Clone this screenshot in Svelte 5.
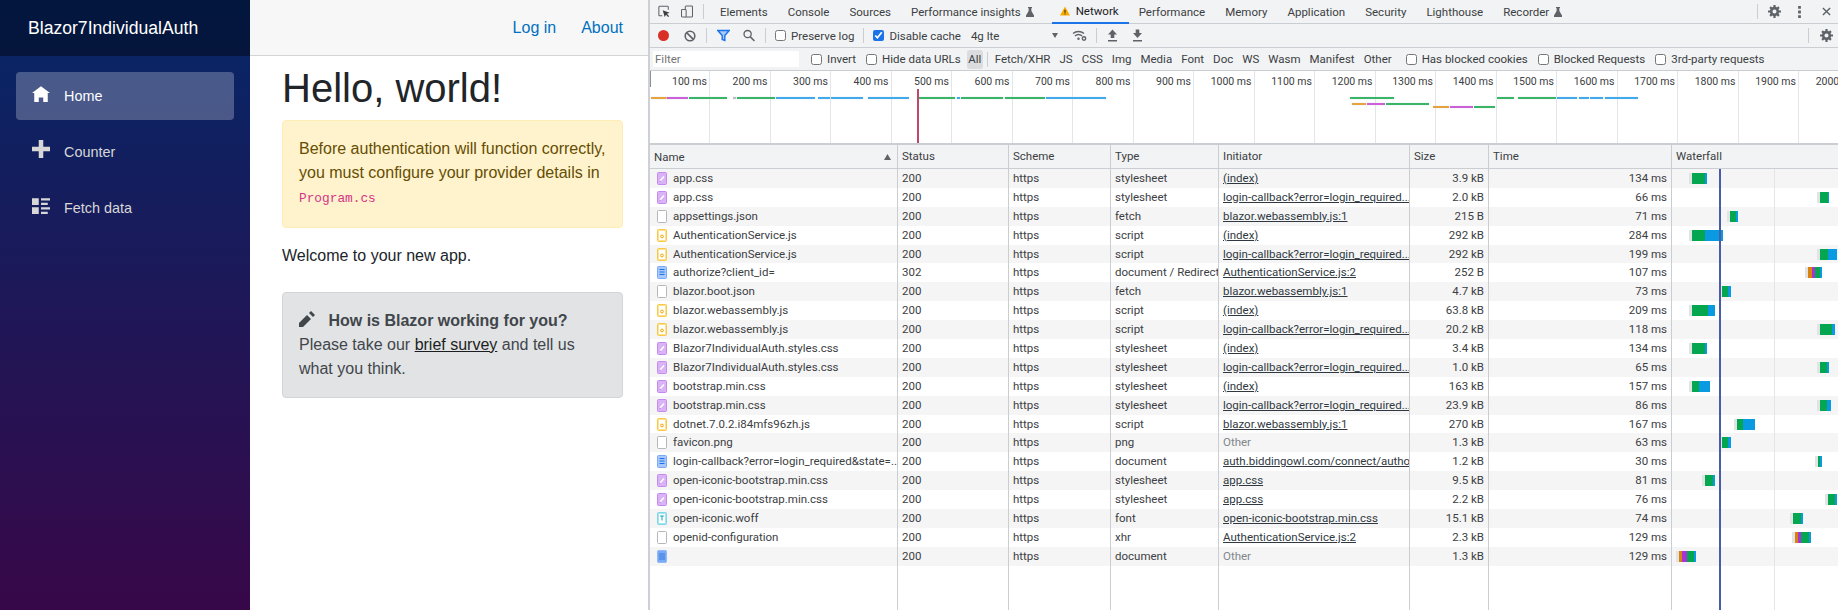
<script>
  const tabs = ['Elements', 'Console', 'Sources'];
  const tabsAfter = ['Performance', 'Memory', 'Application', 'Security', 'Lighthouse'];
  const filters = ['Fetch/XHR', 'JS', 'CSS', 'Img', 'Media', 'Font', 'Doc', 'WS', 'Wasm', 'Manifest', 'Other'];

  const LOGIN = 'login-callback?error=login_required...';
  const BOOT = 'blazor.webassembly.js:1';
  const AUTH = 'AuthenticationService.js:2';

  // name, status, type, initiator, size, time, kind, bar [left, orange, purple, green, blue]
  const rows = [
    ['app.css', '200', 'stylesheet', '(index)', '3.9 kB', '134 ms', 'css', [20.4, 0, 0, 12.5, 2.2]],
    ['app.css', '200', 'stylesheet', LOGIN, '2.0 kB', '66 ms', 'css', [148.3, 0, 0, 7.4, 1.8]],
    ['appsettings.json', '200', 'fetch', BOOT, '215 B', '71 ms', 'blank', [57.6, 0, 0, 6.6, 1.8]],
    ['AuthenticationService.js', '200', 'script', '(index)', '292 kB', '284 ms', 'js', [20.4, 0, 0, 12.9, 17.3]],
    ['AuthenticationService.js', '200', 'script', LOGIN, '292 kB', '199 ms', 'js', [148.3, 0, 0, 7.4, 12]],
    ['authorize?client_id=', '302', 'document / Redirect', AUTH, '252 B', '107 ms', 'doc', [135.7, 4, 3.7, 4.8, 1.8]],
    ['blazor.boot.json', '200', 'fetch', BOOT, '4.7 kB', '73 ms', 'blank', [49.5, 0, 0, 6, 3.3]],
    ['blazor.webassembly.js', '200', 'script', '(index)', '63.8 kB', '209 ms', 'js', [20.4, 0, 0, 15.8, 6.6]],
    ['blazor.webassembly.js', '200', 'script', LOGIN, '20.2 kB', '118 ms', 'js', [148.3, 0, 0, 11.4, 3.3]],
    ['Blazor7IndividualAuth.styles.css', '200', 'stylesheet', '(index)', '3.4 kB', '134 ms', 'css', [20.4, 0, 0, 12.5, 2.2]],
    ['Blazor7IndividualAuth.styles.css', '200', 'stylesheet', LOGIN, '1.0 kB', '65 ms', 'css', [148.3, 0, 0, 6.6, 1.8]],
    ['bootstrap.min.css', '200', 'stylesheet', '(index)', '163 kB', '157 ms', 'css', [20.4, 0, 0, 6.6, 10.7]],
    ['bootstrap.min.css', '200', 'stylesheet', LOGIN, '23.9 kB', '86 ms', 'css', [148.3, 0, 0, 7, 4]],
    ['dotnet.7.0.2.i84mfs96zh.js', '200', 'script', BOOT, '270 kB', '167 ms', 'js', [65, 0, 0, 5.9, 11.8]],
    ['favicon.png', '200', 'png', 'Other', '1.3 kB', '63 ms', 'blank', [50.2, 0, 0, 5.9, 2.6]],
    ['login-callback?error=login_required&state=...', '200', 'document', 'auth.biddingowl.com/connect/autho...', '1.2 kB', '30 ms', 'doc', [146, 0, 0, 2.2, 1.8]],
    ['open-iconic-bootstrap.min.css', '200', 'stylesheet', 'app.css', '9.5 kB', '81 ms', 'css', [33.3, 0, 0, 8.1, 1.8]],
    ['open-iconic-bootstrap.min.css', '200', 'stylesheet', 'app.css', '2.2 kB', '76 ms', 'css', [156, 0, 0, 7, 1.5]],
    ['open-iconic.woff', '200', 'font', 'open-iconic-bootstrap.min.css', '15.1 kB', '74 ms', 'font', [121.4, 0, 0, 7.7, 1.8]],
    ['openid-configuration', '200', 'xhr', AUTH, '2.3 kB', '129 ms', 'blank', [122.5, 3.3, 3.7, 7.7, 1.5]],
    ['', '200', 'document', 'Other', '1.3 kB', '129 ms', 'tablet', [7, 3.3, 4.4, 7.4, 1.5]]
  ];

  const ticks = Array.from({ length: 20 }, (_, i) => ({ x: 59 + 60.5 * i, label: `${(i + 1) * 100} ms` }));

  const O = '#e8a33d', M = '#cf5fd8', G = '#3ab566', B = '#42a9ea', N = '#bdbdbd';
  // x1, x2 in page pixels, lane y from top of overview, colour
  const segments = [
    [651, 666.5, 26, O], [667, 688, 26, M], [688.7, 727.5, 26, G], [733, 736, 26, N], [737, 775, 26, G],
    [775.7, 815, 26, B], [818, 830, 26, B], [831, 862.7, 26, B], [868, 909.4, 26, B],
    [917, 954.5, 26, G], [956.5, 960.4, 26, B], [961, 1002.7, 26, G], [1005, 1044.6, 26, G], [1046, 1105.5, 26, B],
    [1350.3, 1394.5, 26, G], [1352, 1366, 32, O], [1367, 1385, 32, M], [1386, 1429, 32, G],
    [1432.5, 1448.7, 34.5, O], [1450, 1472.7, 34.5, M], [1473.8, 1495, 34.5, G],
    [1496.6, 1514.3, 26, G], [1517.6, 1555.6, 26, G], [1556.7, 1577, 26, B], [1578.5, 1589, 26, B],
    [1590, 1603, 26, B], [1605, 1638, 26, B]
  ];

  const isLink = (t) => t !== 'Other';
</script>

{#snippet gear()}
  <svg class="gear" viewBox="0 0 14 14">
    <circle cx="7" cy="7" r="3.6" fill="none" stroke="#5f6368" stroke-width="2.8" />
    <path d="M5.8 0h2.4v3h-2.4zM5.8 11h2.4v3h-2.4zM0 5.8h3v2.4h-3zM11 5.8h3v2.4h-3zM1.4 3.1l1.7-1.7 2 2-1.7 1.7zM8.9 10.6l1.7-1.7 2 2-1.7 1.7zM10.9 1.4l1.7 1.7-2 2-1.7-1.7zM3.4 8.9l1.7 1.7-2 2-1.7-1.7z" fill="#5f6368" />
  </svg>
{/snippet}

{#snippet flask()}
  <svg class="flask" viewBox="0 0 8 10">
    <path d="M2 0h4v1h-.6v3l2.6 4.6v1.4h-8v-1.4l2.6-4.6v-3h-.6z" fill="#5f6368" />
  </svg>
{/snippet}

{#snippet fileIcon(kind)}
  <svg class="file" viewBox="0 0 10 13">
    {#if kind === 'css'}
      <rect x=".5" y=".5" width="9" height="12" rx="1" fill="#d9b3f5" stroke="#c58af0" />
      <path d="M3 9l4-4.5" stroke="#fff" stroke-width="1.5" />
      <path d="M2.5 9.6l1.4-.2-1-1z" fill="#9334e6" />
    {:else if kind === 'js'}
      <rect x=".5" y=".5" width="9" height="12" rx="1" fill="#fde293" stroke="#f9c846" />
      <rect x="2" y="2" width="6" height="9" fill="#fff" />
      <circle cx="5" cy="7.5" r="1.4" fill="none" stroke="#f2a600" />
    {:else if kind === 'doc'}
      <rect x=".5" y=".5" width="9" height="12" rx="1" fill="#a8c7fa" stroke="#7baaf7" />
      <path d="M2.5 3.5h5M2.5 6h5M2.5 8.5h5" stroke="#1a73e8" />
    {:else if kind === 'font'}
      <rect x=".5" y=".5" width="9" height="12" rx="1" fill="#a5e6f1" stroke="#7ed6e6" />
      <rect x="2" y="2" width="6" height="9" fill="#fff" />
      <path d="M3.2 4h3.6M5 4v4.5" stroke="#12a4bd" />
    {:else if kind === 'tablet'}
      <rect x=".5" y=".5" width="9" height="12" rx="1" fill="#7baaf7" stroke="#8fb8f8" />
      <rect x="2" y="3" width="6" height="7" fill="#5b93ea" />
    {:else}
      <rect x=".5" y=".5" width="9" height="12" rx="1" fill="#fff" stroke="#b5b7ba" />
    {/if}
  </svg>
{/snippet}

<div class="page">
  <aside class="sidebar">
    <div class="brand">Blazor7IndividualAuth</div>
    <nav class="nav">
      <a class="nav-item active" href="#home">
        <svg viewBox="0 -1 8 8"><path d="M4 0l-4 3h1v4h2v-2h2v2h2v-4.03l1 .03-4-3z" /></svg>
        Home
      </a>
      <a class="nav-item" href="#counter">
        <svg viewBox="0 0 8 8"><path d="M3 0v3h-3v2h3v3h2v-3h3v-2h-3v-3h-2z" /></svg>
        Counter
      </a>
      <a class="nav-item" href="#fetch">
        <svg viewBox="0 -1 8 8"><path d="M0 0v3h3v-3h-3zm4 0v1h4v-1h-4zm0 2v1h3v-1h-3zm-4 2v3h3v-3h-3zm4 0v1h4v-1h-4zm0 2v1h3v-1h-3z" /></svg>
        Fetch data
      </a>
    </nav>
  </aside>

  <main class="main">
    <div class="top-row">
      <a href="#login">Log in</a>
      <a href="#about">About</a>
    </div>
    <article class="content">
      <h1>Hello, world!</h1>
      <div class="alert warning">
        Before authentication will function correctly, you must configure your provider details in
        <code>Program.cs</code>
      </div>
      <p>Welcome to your new app.</p>
      <div class="alert secondary">
        <svg class="pencil" viewBox="0 0 8 8"><path d="M6 0l-1 1 2 2 1-1-2-2zm-2 2l-4 4v2h2l4-4-2-2z" /></svg>
        <strong>How is Blazor working for you?</strong>
        <br />
        Please take our <a href="#survey">brief survey</a> and tell us what you think.
      </div>
    </article>
  </main>

  <section class="devtools">
    <div class="bar tabbar">
      <svg class="tool-icon" viewBox="0 0 14 14">
        <path d="M5 12h-3a1 1 0 0 1-1-1v-9a1 1 0 0 1 1-1h9a1 1 0 0 1 1 1v3" fill="none" stroke="#5f6368" stroke-width="1.2" />
        <path d="M5.5 5.5l8 3-3 1.2 2.5 2.8-1.2 1-2.4-2.8-1.6 2.6z" fill="#3c4043" />
      </svg>
      <svg class="tool-icon device" viewBox="0 0 14 14">
        <rect x="5" y=".6" width="8.4" height="12.8" rx="1" fill="none" stroke="#5f6368" stroke-width="1.2" />
        <rect x=".6" y="4.6" width="5.4" height="8.8" rx="1" fill="#f1f3f4" stroke="#5f6368" stroke-width="1.2" />
      </svg>
      <span class="sep tab-sep"></span>
      <div class="tabs">
        {#each tabs as t}<span>{t}</span>{/each}
        <span class="flask-tab">Performance insights {@render flask()}</span>
        <span class="tab-current">
          <svg class="warn" viewBox="0 0 12 11"><path d="M6 0l6 11h-12z" fill="#f9ab00" /><path d="M5.4 4h1.2v3.6h-1.2zM5.4 8.4h1.2v1.2h-1.2z" fill="#202124" /></svg>
          Network
        </span>
        {#each tabsAfter as t}<span>{t}</span>{/each}
        <span class="flask-tab">Recorder {@render flask()}</span>
      </div>
      <div class="bar-right">
        <span class="sep"></span>
        {@render gear()}
        <svg class="dots" viewBox="0 0 3 13"><path d="M0 0h3v3h-3zM0 5h3v3h-3zM0 10h3v3h-3z" fill="#5f6368" /></svg>
        <svg class="close" viewBox="0 0 10 10"><path d="M1 1l8 8M9 1l-8 8" stroke="#5f6368" stroke-width="1.6" /></svg>
      </div>
    </div>

    <div class="bar toolbar">
      <span class="record"></span>
      <svg class="tool-icon clear" viewBox="0 0 12 12">
        <circle cx="6" cy="6" r="4.8" fill="none" stroke="#5f6368" stroke-width="1.6" />
        <path d="M2.6 2.6l6.8 6.8" stroke="#5f6368" stroke-width="1.6" />
      </svg>
      <span class="sep"></span>
      <svg class="tool-icon funnel" viewBox="0 0 13 12">
        <path d="M.8 1h11.4l-4.4 5v5l-2.6-1v-4z" fill="#a8c7fa" stroke="#1a73e8" stroke-width="1.4" />
      </svg>
      <svg class="tool-icon search" viewBox="0 0 13 13">
        <circle cx="5" cy="5" r="3.9" fill="none" stroke="#5f6368" stroke-width="1.4" />
        <path d="M8 8l4.4 4.4" stroke="#5f6368" stroke-width="1.6" />
      </svg>
      <span class="sep"></span>
      <label class="check preserve"><input type="checkbox" />Preserve log</label>
      <span class="sep"></span>
      <label class="check disable"><input type="checkbox" checked />Disable cache</label>
      <span class="throttle">4g lte</span>
      <svg class="caret" viewBox="0 0 6 5"><path d="M0 0h6l-3 5z" fill="#5f6368" /></svg>
      <svg class="tool-icon wifi" viewBox="0 0 15 12">
        <path d="M1 4a8.5 8.5 0 0 1 11 0M3 6.4a5.5 5.5 0 0 1 7 0" fill="none" stroke="#5f6368" stroke-width="1.4" />
        <circle cx="6.5" cy="9.2" r="1.2" fill="#5f6368" />
        <circle cx="12" cy="9" r="1.7" fill="#f1f3f4" stroke="#5f6368" stroke-width="1.4" />
      </svg>
      <span class="sep"></span>
      <svg class="tool-icon arrow" viewBox="0 0 9 12"><path d="M4.5 0l4.5 5h-2.7v3.6h-3.6v-3.6h-2.700zM0 10.400h9v1.600h-9z" fill="#5f6368" /></svg>
      <svg class="tool-icon arrow down" viewBox="0 0 9 12"><path d="M2.700 0h3.600v3.600h2.700l-4.500 5-4.500-5h2.700zM0 10.400h9v1.600h-9z" fill="#5f6368" /></svg>
      <div class="bar-right">
        <span class="sep"></span>
        {@render gear()}
      </div>
    </div>

    <div class="bar filterbar">
      <div class="filter-input">Filter</div>
      <label class="check invert"><input type="checkbox" />Invert</label>
      <label class="check hide-urls"><input type="checkbox" />Hide data URLs</label>
      <span class="chip">All</span>
      <span class="sep"></span>
      <div class="types">
        {#each filters as f}<span>{f}</span>{/each}
      </div>
      <label class="check blocked-first"><input type="checkbox" />Has blocked cookies</label>
      <label class="check"><input type="checkbox" />Blocked Requests</label>
      <label class="check"><input type="checkbox" />3rd-party requests</label>
    </div>

    <div class="overview">
      {#each ticks as t}
        <span class="grid-line" style="left: {t.x}px"></span>
        <span class="tick" style="left: {t.x - 62}px">{t.label}</span>
      {/each}
      <span class="range-handle"></span>
      {#each segments as s}
        <span class="segment" style="left: {s[0] - 650}px; width: {s[1] - s[0]}px; top: {s[2]}px; background: {s[3]}"></span>
      {/each}
      <span class="load-line"></span>
    </div>

    <div class="table">
      <div class="row head">
        <div class="cell name-head">Name <svg class="sort" viewBox="0 0 7 6"><path d="M3.500 0l3.500 6h-7z" fill="#5f6368" /></svg></div>
        <div class="cell">Status</div>
        <div class="cell">Scheme</div>
        <div class="cell">Type</div>
        <div class="cell">Initiator</div>
        <div class="cell">Size</div>
        <div class="cell">Time</div>
        <div class="cell last">Waterfall</div>
      </div>
      <div class="body">
        <div class="columns">
          {#each Array(7) as _}<span></span>{/each}
        </div>
        {#each rows as r}
          <div class="row">
            <div class="cell name">{@render fileIcon(r[6])}<span>{r[0]}</span></div>
            <div class="cell">{r[1]}</div>
            <div class="cell">https</div>
            <div class="cell">{r[2]}</div>
            <div class="cell" class:init={isLink(r[3])} class:muted={!isLink(r[3])}>{r[3]}</div>
            <div class="cell num">{r[4]}</div>
            <div class="cell num">{r[5]}</div>
            <div class="cell last wf">
              <span class="whisker" style="left: {r[7][0] - 3}px"></span>
              <span class="wbar" style="left: {r[7][0]}px">
                <i style="width: {r[7][1]}px; background: #d9830f"></i><i style="width: {r[7][2]}px; background: #a933d6"></i><i style="width: {r[7][3]}px; background: #04a74f"></i><i style="width: {r[7][4]}px; background: #0a9ae2"></i>
              </span>
            </div>
          </div>
        {/each}
        <span class="wf-line blue"></span>
        <span class="wf-line gray"></span>
      </div>
    </div>
  </section>
</div>

<style>
  :global(body) {
    margin: 0;
    background: #fff;
    overflow: hidden;
  }
  .page {
    display: flex;
    width: 1838px;
    height: 610px;
    overflow: hidden;
    font-family: 'Liberation Sans', Arial, sans-serif;
    font-size: 16px;
    color: #212529;
  }

  .sidebar {
    width: 250px;
    flex: none;
    background: linear-gradient(180deg, #052767 0, #3a0647 640px);
  }
  .brand {
    height: 56px;
    padding-left: 28px;
    display: flex;
    align-items: center;
    background: rgba(0, 0, 0, 0.4);
    color: #fff;
    font-size: 17.6px;
  }
  .nav {
    padding: 16px 16px 0;
    display: flex;
    flex-direction: column;
    gap: 8px;
  }
  .nav-item {
    height: 48px;
    padding-left: 16px;
    display: flex;
    align-items: center;
    border-radius: 4px;
    color: #d7d7d7;
    font-size: 14.4px;
    text-decoration: none;
  }
  .nav-item svg {
    width: 18px;
    height: 18px;
    margin: 0 14px 6px 0;
    fill: #d7d7d7;
  }
  .nav-item.active {
    background: rgba(255, 255, 255, 0.25);
    color: #fff;
  }
  .nav-item.active svg {
    fill: #fff;
  }

  .main {
    width: 398px;
    flex: none;
  }
  .top-row {
    height: 56px;
    box-sizing: border-box;
    padding-right: 25px;
    display: flex;
    justify-content: flex-end;
    align-items: center;
    gap: 25px;
    background: #f7f7f7;
    border-bottom: 1px solid #d6d5d5;
  }
  .top-row a {
    color: #0071c1;
    text-decoration: none;
  }
  .content {
    padding: 8px 25px 0 32px;
    line-height: 24px;
  }
  h1 {
    margin: 0 0 8px;
    font-size: 40px;
    font-weight: 500;
    line-height: 48px;
  }
  .alert {
    padding: 16px;
    border: 1px solid;
    border-radius: 4px;
  }
  .warning {
    margin-bottom: 16px;
    background: #fff3cd;
    border-color: #ffecb5;
    color: #664d03;
  }
  code {
    font-family: 'Liberation Mono', monospace;
    font-size: 12.8px;
    color: #d63384;
  }
  p {
    margin: 0 0 24px;
  }
  .secondary {
    background: #e2e3e5;
    border-color: #d3d6d8;
    color: #41464b;
  }
  .secondary a {
    color: #1b1e21;
  }
  .pencil {
    width: 16px;
    height: 16px;
    margin-right: 9px;
    fill: #41464b;
    vertical-align: -1px;
  }

  .devtools {
    width: 1190px;
    flex: none;
    box-sizing: border-box;
    border-left: 2px solid #cdd0d5;
    display: flex;
    flex-direction: column;
    background: #f1f3f4;
    font-family: Roboto, 'Liberation Sans', sans-serif;
    font-size: 11.5px;
    color: #3c4043;
    overflow: hidden;
  }
  .bar {
    flex: none;
    display: flex;
    align-items: center;
    box-sizing: border-box;
    border-bottom: 1px solid #cacdd1;
  }
  .bar-right {
    margin-left: auto;
    display: flex;
    align-items: center;
  }
  .sep {
    flex: none;
    width: 1px;
    height: 15px;
    background: #cacdd1;
  }
  .tool-icon {
    flex: none;
    width: 12px;
    height: 13px;
  }
  .tabbar {
    height: 24px;
    padding-left: 8px;
  }
  .tabbar .device {
    margin-left: 11px;
  }
  .tab-sep {
    margin: 0 16px 0 10px;
  }
  .tabs {
    display: flex;
    align-items: center;
    gap: 20px;
    height: 100%;
  }
  .tabs span {
    white-space: nowrap;
  }
  .flask {
    width: 8px;
    height: 10px;
    margin-left: 2px;
    vertical-align: -1px;
  }
  .tab-current {
    box-sizing: border-box;
    height: 24px;
    margin-left: -2px;
    padding: 0 10px 0 8px;
    display: flex;
    align-items: center;
    gap: 6px;
    border-bottom: 2px solid #1a73e8;
    margin-right: -10px;
    color: #202124;
  }
  .warn {
    width: 10px;
    height: 10px;
  }
  .tabbar .bar-right .sep {
    margin-right: 10px;
  }
  .gear {
    width: 13px;
    height: 13px;
  }
  .dots {
    width: 3px;
    height: 12px;
    margin: 0 0 0 17px;
  }
  .close {
    width: 9px;
    height: 9px;
    margin: 0 7px 0 21px;
  }

  .toolbar {
    height: 24px;
    padding-left: 8px;
  }
  .record {
    flex: none;
    width: 11px;
    height: 11px;
    border-radius: 50%;
    background: #d93025;
  }
  .clear {
    margin: 0 10px 0 15px;
    height: 12px;
  }
  .funnel {
    width: 13px;
    margin: 0 13px 0 10px;
  }
  .search {
    margin-right: 10px;
  }
  .check {
    display: inline-flex;
    align-items: center;
    gap: 5px;
    white-space: nowrap;
  }
  .check input {
    width: 11px;
    height: 11px;
    margin: 0;
    accent-color: #1a73e8;
  }
  .preserve {
    margin: 0 9px;
  }
  .disable {
    margin-left: 9px;
  }
  .throttle {
    margin-left: 10px;
  }
  .caret {
    width: 6px;
    height: 5px;
    margin: 0 14px 0 53px;
  }
  .wifi {
    width: 15px;
    margin-right: 9px;
  }
  .arrow {
    width: 9px;
    margin-left: 11px;
  }
  .arrow.down {
    margin-left: 16px;
  }
  .toolbar .bar-right .sep {
    margin-right: 11px;
  }
  .toolbar .bar-right {
    padding-right: 5px;
  }

  .filterbar {
    height: 23px;
    padding-left: 3px;
  }
  .filter-input {
    width: 146px;
    height: 16px;
    padding-left: 2px;
    box-sizing: border-box;
    display: flex;
    align-items: center;
    background: #fff;
    color: #757575;
  }
  .invert {
    margin-left: 12px;
  }
  .hide-urls {
    margin-left: 9px;
  }
  .chip {
    margin: 0 4px 0 6px;
    width: 16px;
    height: 19px;
    display: flex;
    align-items: center;
    justify-content: center;
    border-radius: 3px;
    background: #dadce0;
  }
  .types {
    margin-left: 7px;
    display: flex;
    gap: 9px;
  }
  .filterbar .check + .check {
    margin-left: 10px;
  }
  .blocked-first {
    margin-left: 14px;
  }

  .overview {
    flex: none;
    position: relative;
    height: 72px;
    background: #fff;
    border-bottom: 2px solid #cacdd1;
    overflow: hidden;
  }
  .grid-line {
    position: absolute;
    top: 0;
    bottom: 0;
    width: 1px;
    background: #e3e5e8;
  }
  .tick {
    position: absolute;
    top: 4px;
    width: 60px;
    text-align: right;
    font-size: 10.5px;
    line-height: 13px;
    color: #3c4043;
  }
  .range-handle {
    position: absolute;
    left: 0;
    top: 0;
    width: 1px;
    height: 16px;
    background: #8d9094;
  }
  .segment {
    position: absolute;
    height: 2px;
    box-shadow: 0 0 0 0.5px rgba(255, 255, 255, 0.4), 0 0 2px rgba(120, 180, 200, 0.35);
  }
  .load-line {
    position: absolute;
    left: 267px;
    top: 18px;
    bottom: 0;
    width: 1.5px;
    background: #c0476a;
  }

  .table {
    flex: 1;
    min-height: 0;
    background: #fff;
  }
  .row {
    display: grid;
    grid-template-columns: 248px 111px 102px 108px 191px 79px 183px 1fr;
    height: 18.9px;
    line-height: 18.9px;
  }
  .row:nth-child(even) {
    background: #f5f5f5;
  }
  .head {
    height: 23px;
    line-height: 22px;
    background: #f1f3f4;
    border-bottom: 1px solid #cacdd1;
  }
  .cell {
    padding-left: 4px;
    border-right: 1px solid transparent;
    box-sizing: border-box;
    white-space: nowrap;
    overflow: hidden;
    position: relative;
  }
  .head .cell {
    border-right-color: #cacdd1;
  }
  .head .cell.last {
    border-right: 0;
  }
  .name-head {
    display: flex;
    align-items: center;
    justify-content: space-between;
    padding-right: 6px;
  }
  .sort {
    width: 7px;
    height: 6px;
  }
  .body {
    position: relative;
    height: 442px;
  }
  .columns {
    position: absolute;
    inset: 0;
    display: grid;
    grid-template-columns: 248px 111px 102px 108px 191px 79px 183px;
    pointer-events: none;
    z-index: 1;
  }
  .columns span {
    border-right: 1px solid #cacdd1;
  }
  .name {
    display: flex;
    align-items: center;
    padding-left: 7px;
    gap: 6px;
  }
  .file {
    flex: none;
    width: 10px;
    height: 13px;
  }
  .init {
    text-decoration: underline;
    color: #303942;
  }
  .muted {
    color: #80868b;
  }
  .num {
    text-align: right;
    padding-right: 4px;
  }
  .wf {
    overflow: hidden;
  }
  .whisker {
    position: absolute;
    top: 4px;
    width: 3px;
    height: 11px;
    background: #e2e3e4;
  }
  .wbar {
    position: absolute;
    top: 4px;
    height: 11px;
    display: flex;
  }
  .wbar i {
    display: block;
    height: 100%;
  }
  .wf-line {
    position: absolute;
    top: 0;
    bottom: 0;
    z-index: 2;
  }
  .blue {
    left: 1069px;
    width: 1.5px;
    background: #4a5ca8;
  }
  .gray {
    left: 1124px;
    width: 1px;
    background: #e3e5e8;
  }
</style>
